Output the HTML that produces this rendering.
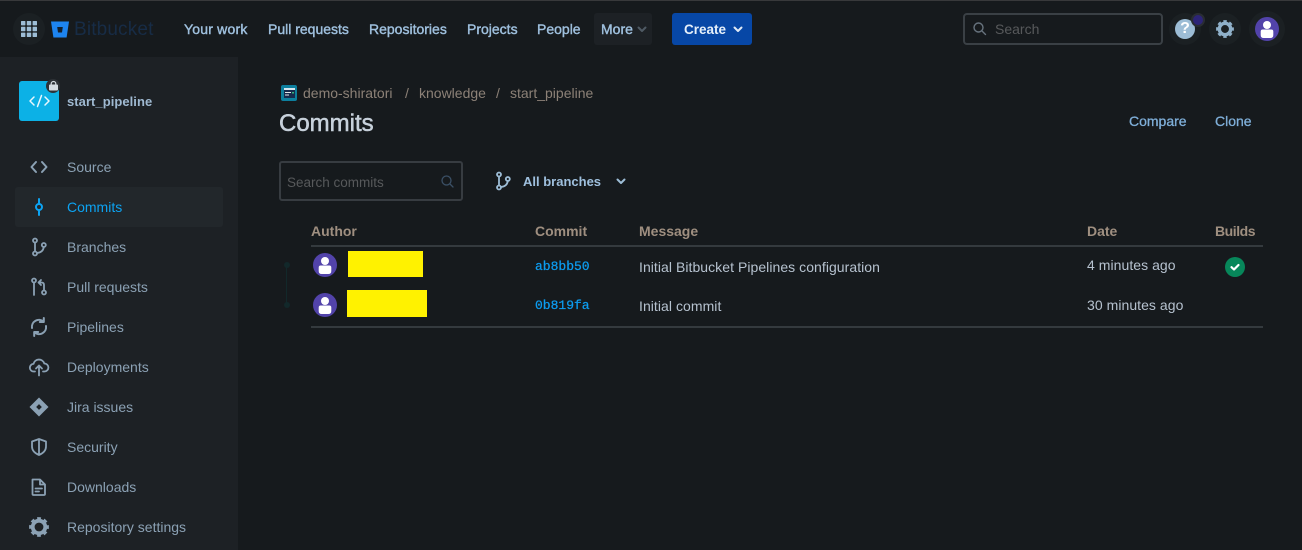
<!DOCTYPE html>
<html><head><meta charset="utf-8"><title>Commits</title>
<style>
html,body{margin:0;padding:0;background:#161a1d;}
body{width:1302px;height:550px;overflow:hidden;position:relative;font-family:"Liberation Sans",sans-serif;font-size:14px;}
.a{position:absolute;white-space:nowrap;line-height:20px;}
.n{color:#9fc0de;-webkit-text-stroke:.4px #9fc0de;top:19px;}
.s{color:#8ba1b4;left:67px;}
.h{color:#9f8f80;font-weight:700;top:221px;font-size:14px;}
.d{color:#b6c2cf;letter-spacing:.05px;}
.b{color:#8c8177;top:83px;}
svg{position:absolute;overflow:visible;}
.i{fill:none;stroke:#8ba1b4;stroke-width:2;stroke-linecap:round;stroke-linejoin:round;}
</style></head><body>
<div class="a" style="left:0;top:0;width:1302px;height:1px;background:#38393b;"></div>
<div class="a" style="left:0;top:57px;width:238px;height:493px;background:#1d2125;"></div>

<!-- top nav -->
<div class="a" style="left:13px;top:13px;width:32px;height:32px;border-radius:50%;background:#1b2023;"></div>
<svg style="left:21px;top:21px" width="16" height="16" fill="#9dbdd6"><rect width="4.4" height="4.4" rx=".6"/><rect x="5.8" width="4.4" height="4.4" rx=".6"/><rect x="11.6" width="4.4" height="4.4" rx=".6"/><rect y="5.8" width="4.4" height="4.4" rx=".6"/><rect x="5.8" y="5.8" width="4.4" height="4.4" rx=".6"/><rect x="11.6" y="5.8" width="4.4" height="4.4" rx=".6"/><rect y="11.6" width="4.4" height="4.4" rx=".6"/><rect x="5.8" y="11.6" width="4.4" height="4.4" rx=".6"/><rect x="11.6" y="11.6" width="4.4" height="4.4" rx=".6"/></svg>
<svg style="left:51px;top:21px" width="18" height="17"><path d="M0 .5H18L15.6 16.5H2.4Z" fill="#1d84f0"/><path d="M6.2 6H11.800L11 11.500H7Z" fill="#13202e"/></svg>
<div class="a" style="left:74px;top:18px;font-size:19px;line-height:24px;color:#172c46;letter-spacing:.15px;">Bitbucket</div>
<div class="a n" style="left:184px;letter-spacing:.2px;">Your work</div>
<div class="a n" style="left:268px;">Pull requests</div>
<div class="a n" style="left:369px;">Repositories</div>
<div class="a n" style="left:467px;">Projects</div>
<div class="a n" style="left:537px;">People</div>
<div class="a" style="left:594px;top:13px;width:58px;height:32px;border-radius:3px;background:#1d2125;"></div>
<div class="a n" style="left:601px;">More</div>
<svg style="left:637px;top:26px" width="10" height="7"><path d="M1.500 1.500 5 5l3.500-3.500" fill="none" stroke="#4f5a64" stroke-width="2" stroke-linecap="round" stroke-linejoin="round"/></svg>
<div class="a" style="left:672px;top:13px;width:80px;height:32px;border-radius:3px;background:#0747a6;"></div>
<div class="a" style="left:684px;top:20px;color:#e6f0fa;font-weight:700;font-size:13.500px;">Create</div>
<svg style="left:733px;top:26px" width="10" height="7"><path d="M1.500 1.500 5 5l3.500-3.500" fill="none" stroke="#dfe9f5" stroke-width="2" stroke-linecap="round" stroke-linejoin="round"/></svg>

<div class="a" style="left:963px;top:13px;width:196px;height:28px;border:2px solid #3a4045;border-radius:4px;"></div>
<svg style="left:973px;top:22px" width="13" height="13" fill="none" stroke="#67737e" stroke-width="1.400"><circle cx="5.500" cy="5.500" r="4.500"/><path d="m9 9 3.500 3.500" stroke-linecap="round"/></svg>
<div class="a" style="left:995px;top:19px;color:#57595b;">Search</div>

<div class="a" style="left:1169px;top:13px;width:32px;height:32px;border-radius:50%;background:#1b2023;"></div>
<div class="a" style="left:1175px;top:19px;width:20px;height:20px;border-radius:50%;background:#9dbdd6;"></div>
<div class="a" style="left:1175px;top:19px;width:20px;text-align:center;color:#fff;font-weight:700;font-size:16px;">?</div>
<div class="a" style="left:1191px;top:13px;width:14px;height:14px;border-radius:50%;background:#292d33;"></div>
<div class="a" style="left:1193px;top:15px;width:10px;height:10px;border-radius:50%;background:#2c2477;"></div>
<div class="a" style="left:1209px;top:13px;width:32px;height:32px;border-radius:50%;background:#1b2023;"></div>
<svg style="left:1216px;top:20px" width="18" height="18" viewBox="0 0 20 20"><circle cx="10" cy="10" r="6.300" fill="none" stroke="#8fb0c9" stroke-width="3.800"/><circle cx="10" cy="10" r="8.700" fill="none" stroke="#8fb0c9" stroke-width="2.400" stroke-dasharray="3.800 3" stroke-dashoffset="1.900"/></svg>
<div class="a" style="left:1249px;top:11px;width:36px;height:36px;border-radius:50%;background:#1b2023;"></div>
<svg style="left:1255px;top:17px" width="24" height="24" viewBox="0 0 24 24"><circle cx="12" cy="12" r="12" fill="#5243aa"/><circle cx="12" cy="8" r="4" fill="#fff"/><path d="M5.700 14.500q0-2 2-2h8.600q2 0 2 2v3.500q0 3-3 3h-6.600q-3 0-3-3Z" fill="#fff"/></svg>

<!-- repo header -->
<div class="a" style="left:19px;top:81px;width:40px;height:40px;border-radius:3px;background:#0cb1e6;"></div>
<svg style="left:29px;top:94px" width="21" height="14" fill="none" stroke="#e8f7fd" stroke-width="1.500" stroke-linecap="round" stroke-linejoin="round"><path d="M5 3 1 7l4 4M16 3l4 4-4 4M12.500 1.500 8.500 12.500"/></svg>
<div class="a" style="left:46px;top:79px;width:14px;height:14px;border-radius:50%;background:#2d3136;"></div>
<svg style="left:48.500px;top:81px" width="9" height="10"><rect y="3.500" width="9" height="6" rx="1" fill="#d5dce2"/><path d="M2.200 4V2.800a2.300 2.300 0 0 1 4.600 0V4" fill="none" stroke="#d5dce2" stroke-width="1.200"/></svg>
<div class="a" style="left:67px;top:92px;color:#9fb9d1;font-weight:700;font-size:13px;letter-spacing:.05px;">start_pipeline</div>

<!-- sidebar -->
<div class="a" style="left:15px;top:187px;width:208px;height:40px;border-radius:3px;background:#22272b;"></div>
<div class="a s" style="top:157px;">Source</div>
<div class="a s" style="top:197px;color:#0ca3f2;">Commits</div>
<div class="a s" style="top:237px;">Branches</div>
<div class="a s" style="top:277px;">Pull requests</div>
<div class="a s" style="top:317px;">Pipelines</div>
<div class="a s" style="top:357px;">Deployments</div>
<div class="a s" style="top:397px;">Jira issues</div>
<div class="a s" style="top:437px;">Security</div>
<div class="a s" style="top:477px;">Downloads</div>
<div class="a s" style="top:517px;">Repository settings</div>

<svg class="i" style="left:29px;top:157px" width="20" height="20"><path d="M7 5 2.500 10 7 15M13 5l4.500 5-4.500 5"/></svg>
<svg class="i" style="left:29px;top:197px;stroke:#0ca3f2" width="20" height="20"><circle cx="10" cy="10" r="3"/><path d="M10 2v5M10 13v5"/></svg>
<svg class="i" style="left:29px;top:237px;stroke-width:1.800" width="20" height="20"><circle cx="6" cy="3.500" r="2"/><circle cx="6" cy="16.500" r="2"/><circle cx="14.800" cy="8" r="2"/><path d="M6 5.500v9M8 16q6-.5 6.800-6"/></svg>
<svg class="i" style="left:29px;top:277px;stroke-width:1.800" width="20" height="20"><circle cx="5" cy="3.500" r="2"/><circle cx="15" cy="15.500" r="2"/><path d="M5 5.500V18M15 13.500V8q0-2.500-2.500-2.500H10M12 3 9.500 5.500 12 8"/></svg>
<svg class="i" style="left:29px;top:317px" width="20" height="20"><path d="M3 11A7 7 0 0 1 14.500 4.600M17 9A7 7 0 0 1 5.500 15.400M14.800 1v4h-4M5.200 19v-4h4"/></svg>
<svg class="i" style="left:29px;top:357px;stroke-width:1.800" width="20" height="20"><path d="M6 14.500H4.800a3.800 3.800 0 0 1-.3-7.600A5.600 5.600 0 0 1 15.300 6.500a4 4 0 0 1 .2 8H14M10 18.500V9M7 11.500l3-3 3 3"/></svg>
<svg style="left:29px;top:397px" width="20" height="20"><path d="M10 .5 19.500 10 10 19.500.5 10Z" fill="#8ba1b4"/><rect x="8" y="8" width="4" height="4" transform="rotate(45 10 10)" fill="#1d2125"/></svg>
<svg class="i" style="left:29px;top:437px;stroke-width:1.800" width="20" height="20"><path d="M10 2 17 4.500v5q0 5.500-7 8.500-7-3-7-8.500v-5ZM10 2.500v15"/></svg>
<svg class="i" style="left:29px;top:477px;stroke-width:1.800" width="20" height="20"><path d="M3.500 2.500H11l5 5V17q0 1-1 1H4.500q-1 0-1-1ZM11 2.500v5h5M6.500 11.500h6.500M6.500 14.500h3.500"/></svg>
<svg style="left:29px;top:517px" width="20" height="20" viewBox="0 0 20 20"><circle cx="10" cy="10" r="6.300" fill="none" stroke="#8ba1b4" stroke-width="3.800"/><circle cx="10" cy="10" r="8.700" fill="none" stroke="#8ba1b4" stroke-width="2.400" stroke-dasharray="3.800 3" stroke-dashoffset="1.900"/></svg>

<!-- breadcrumbs -->
<svg style="left:281px;top:85px" width="16" height="16"><rect width="16" height="16" rx="2" fill="#0d7f9e"/><rect x="3" y="3" width="11" height="10" fill="#172b4d"/><rect x="3" y="3" width="11" height="2" fill="#d8e6ee"/><rect x="4" y="7" width="6" height="1" fill="#e0e6ea"/><rect x="4" y="9.500" width="4" height="1" fill="#e0e6ea"/><rect x="11" y="7" width="2" height="1.500" fill="#36b37e"/></svg>
<div class="a b" style="left:303px;">demo-shiratori</div>
<div class="a b" style="left:405px;">/</div>
<div class="a b" style="left:419px;">knowledge</div>
<div class="a b" style="left:496px;">/</div>
<div class="a b" style="left:510px;">start_pipeline</div>
<div class="a" style="left:279px;top:109px;font-size:24px;line-height:30px;color:#c7d1db;-webkit-text-stroke:.5px #c7d1db;">Commits</div>
<div class="a" style="left:1129px;top:111px;color:#7fafd9;-webkit-text-stroke:.3px #7fafd9;">Compare</div>
<div class="a" style="left:1215px;top:111px;color:#7fafd9;-webkit-text-stroke:.3px #7fafd9;">Clone</div>

<!-- filters -->
<div class="a" style="left:279px;top:161px;width:180px;height:36px;border:2px solid #373c41;border-radius:3px;"></div>
<div class="a" style="left:287px;top:173px;color:#57595b;font-size:13.500px;">Search commits</div>
<svg style="left:441px;top:175px" width="13" height="13" fill="none" stroke="#3b5066" stroke-width="1.300"><circle cx="5.500" cy="5.500" r="4.500"/><path d="m9 9 3 3" stroke-linecap="round"/></svg>
<svg class="i" style="left:493px;top:171px;stroke:#9dbdd6;stroke-width:1.800" width="20" height="20"><circle cx="6" cy="3.500" r="2"/><circle cx="6" cy="16.500" r="2"/><circle cx="14.800" cy="8" r="2"/><path d="M6 5.500v9M8 16q6-.5 6.800-6"/></svg>
<div class="a" style="left:523px;top:172px;color:#9fc0de;font-weight:700;font-size:13px;">All branches</div>
<svg style="left:616px;top:178px" width="10" height="7"><path d="M1.500 1.500 5 5l3.500-3.500" fill="none" stroke="#9dbdd6" stroke-width="2" stroke-linecap="round" stroke-linejoin="round"/></svg>

<!-- table -->
<div class="a h" style="left:311px;">Author</div>
<div class="a h" style="left:535px;">Commit</div>
<div class="a h" style="left:639px;">Message</div>
<div class="a h" style="left:1087px;">Date</div>
<div class="a h" style="left:1215px;letter-spacing:-.45px;">Builds</div>
<div class="a" style="left:311px;top:245px;width:952px;height:2px;background:#343a3e;"></div>
<div class="a" style="left:311px;top:326px;width:952px;height:2px;background:#343a3e;"></div>

<div class="a" style="left:286px;top:265px;width:1px;height:40px;background:#12282a;"></div>
<div class="a" style="left:284px;top:262px;width:6px;height:6px;border-radius:50%;background:#12282a;"></div>
<div class="a" style="left:284px;top:302px;width:6px;height:6px;border-radius:50%;background:#12282a;"></div>

<svg style="left:313px;top:253px" width="24" height="24" viewBox="0 0 24 24"><circle cx="12" cy="12" r="12" fill="#5243aa"/><circle cx="12" cy="8" r="4" fill="#fff"/><path d="M5.700 14.500q0-2 2-2h8.600q2 0 2 2v3.500q0 3-3 3h-6.600q-3 0-3-3Z" fill="#fff"/></svg>
<svg style="left:313px;top:293px" width="24" height="24" viewBox="0 0 24 24"><circle cx="12" cy="12" r="12" fill="#5243aa"/><circle cx="12" cy="8" r="4" fill="#fff"/><path d="M5.700 14.500q0-2 2-2h8.600q2 0 2 2v3.500q0 3-3 3h-6.600q-3 0-3-3Z" fill="#fff"/></svg>
<div class="a" style="left:348px;top:251px;width:75px;height:26px;background:#fff200;"></div>
<div class="a" style="left:347px;top:290px;width:80px;height:27px;background:#fff200;"></div>

<div class="a" style="left:535px;top:257px;color:#0c9cf0;font-family:'Liberation Mono',monospace;font-size:13px;-webkit-text-stroke:.25px #0c9cf0;">ab8bb50</div>
<div class="a" style="left:535px;top:296px;color:#0c9cf0;font-family:'Liberation Mono',monospace;font-size:13px;-webkit-text-stroke:.25px #0c9cf0;">0b819fa</div>
<div class="a d" style="left:639px;top:257px;">Initial Bitbucket Pipelines configuration</div>
<div class="a d" style="left:639px;top:296px;">Initial commit</div>
<div class="a d" style="left:1087px;top:255px;">4 minutes ago</div>
<div class="a d" style="left:1087px;top:295px;">30 minutes ago</div>
<svg style="left:1225px;top:257px" width="20" height="20"><circle cx="10" cy="10" r="10" fill="#07875a"/><path d="M6.500 10.200 9 12.500l4.500-4.500" fill="none" stroke="#fff" stroke-width="2.200" stroke-linecap="round" stroke-linejoin="round"/></svg>
</body></html>
